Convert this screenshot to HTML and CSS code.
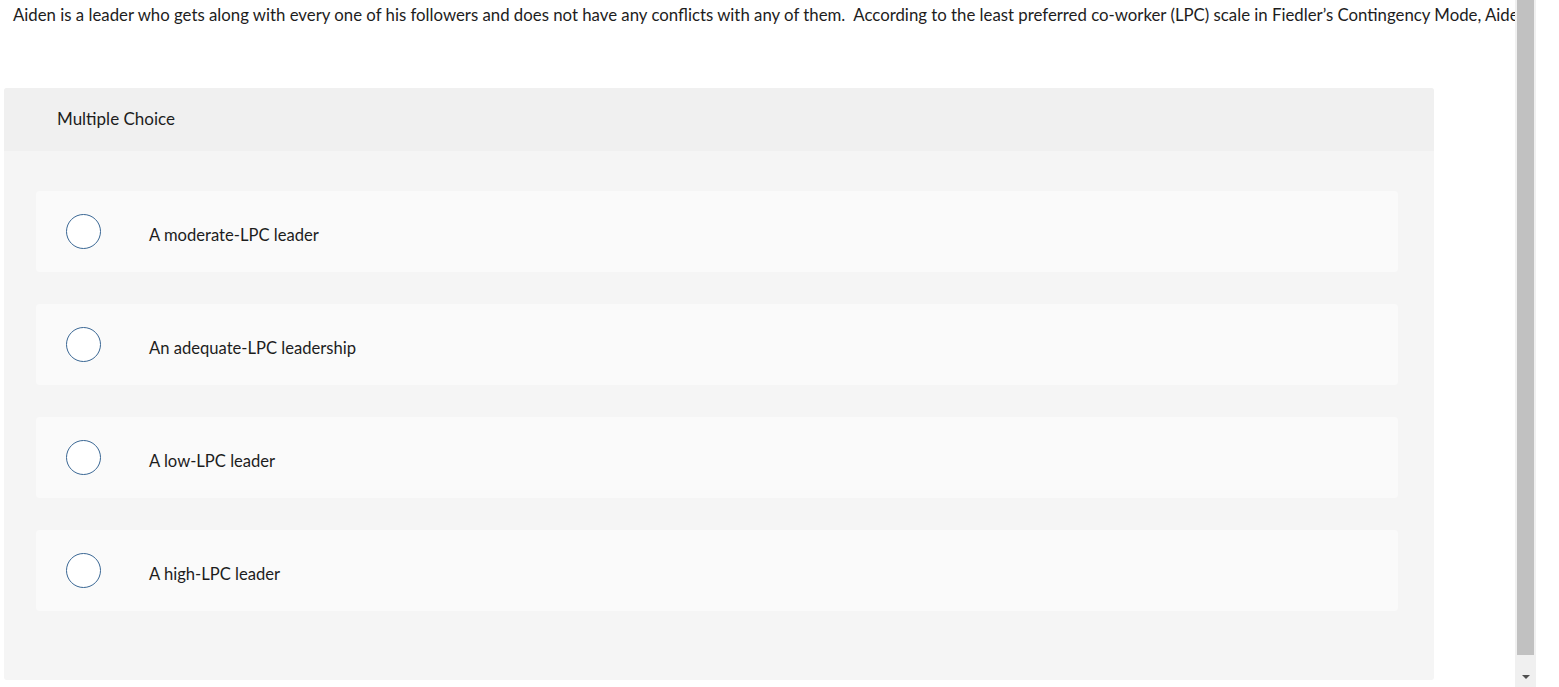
FILE: index.html
```html
<!DOCTYPE html>
<html>
<head>
<meta charset="utf-8">
<link rel="stylesheet" href="styles.css">
</head>
<body>
<div class="frame">
  <div class="content">
    <p class="question">Aiden is a leader who gets along with every one of his followers and does not have any conflicts with any of them.&nbsp; According to the least preferred co-worker (LPC) scale in Fiedler’s Contingency Mode, Aiden is most likely which of the following?</p>
    <section class="panel">
      <header class="panel-head">Multiple Choice</header>
      <div class="panel-body">
        <label class="option"><span class="radio"></span><span class="opt-text">A moderate-LPC leader</span></label>
        <label class="option"><span class="radio"></span><span class="opt-text">An adequate-LPC leadership</span></label>
        <label class="option"><span class="radio"></span><span class="opt-text">A low-LPC leader</span></label>
        <label class="option"><span class="radio"></span><span class="opt-text">A high-LPC leader</span></label>
      </div>
    </section>
  </div>
  <div class="scrollbar">
    <div class="thumb"></div>
    <div class="arrow"></div>
  </div>
</div>
</body>
</html>
```

FILE: styles.css
```css
html, body {
  margin: 0;
  padding: 0;
  background: #fff;
}
body {
  font-family: "Lato", "Open Sans", sans-serif;
  color: #1d1d1d;
}
.frame {
  display: flex;
  width: 1536px;
  height: 687px;
  overflow: hidden;
}
.content {
  width: 1515px;
  overflow: hidden;
}
.question {
  margin: 0;
  padding: 5px 0 0 13px;
  height: 82px;
  box-sizing: border-box;
  font-size: 16.8px;
  line-height: 20px;
  white-space: nowrap;
  overflow: hidden;
}
.panel {
  margin-left: 4px;
  width: 1430px;
  background: #f5f5f5;
  border-radius: 3px;
  overflow: hidden;
  margin-top: 6px;
}
.panel-head {
  background: #f0f0f0;
  height: 63px;
  display: flex;
  align-items: center;
  padding-left: 53px;
  padding-bottom: 2px;
  box-sizing: border-box;
  font-size: 17px;
}
.panel-body {
  padding: 40px 36px 69px 32px;
  display: flex;
  flex-direction: column;
  gap: 32px;
}
.option {
  height: 81px;
  background: #fafafa;
  border-radius: 4px;
  display: flex;
  align-items: center;
  padding-left: 30px;
}
.radio {
  width: 33px;
  height: 33px;
  border: 1.5px solid #3a6794;
  border-radius: 50%;
  background: #fff;
  flex: none;
}
.opt-text {
  margin-left: 48px;
  padding-top: 6px;
  font-size: 16.6px;
}
.scrollbar {
  width: 21px;
  background: #f0f0f0;
  display: flex;
  flex-direction: column;
  align-items: center;
}
.thumb {
  width: 17px;
  height: 655px;
  background: #c1c1c1;
}
.arrow {
  margin-top: 20px;
  width: 0;
  height: 0;
  border-left: 4px solid transparent;
  border-right: 4px solid transparent;
  border-top: 4px solid #505050;
}
```
